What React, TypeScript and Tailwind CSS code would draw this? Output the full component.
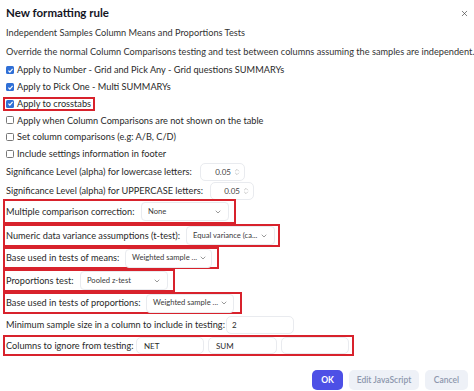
import { X, ChevronDown, ChevronsUpDown } from "lucide-react";

const font = { fontFamily: "Lato, 'Noto Sans', sans-serif" };

function Check({ checked, label, boxed }: { checked?: boolean; label: string; boxed?: boolean }) {
  return (
    <div className="flex h-[16.7px] items-center">
      <div
        className={`flex items-center gap-[3px] whitespace-nowrap ${boxed ? "-ml-[3px] h-[14px] border-2 border-[#d8222c] pl-[1px] pr-[2px]" : ""}`}
      >
        {checked ? (
          <span className="flex h-[8px] w-[8px] items-center justify-center rounded-[1.5px] bg-[#2f6fd6]">
            <svg viewBox="0 0 10 10" className="h-[7px] w-[7px]">
              <path d="M2 5.2 4.1 7.2 8 2.8" fill="none" stroke="white" strokeWidth="1.7" />
            </svg>
          </span>
        ) : (
          <span className="h-[8px] w-[8px] rounded-[1.5px] border border-[#777]" />
        )}
        <span className="text-[9.2px] text-[#2a2a2a]">{label}</span>
      </div>
    </div>
  );
}

function Select({ value, w }: { value: string; w: string }) {
  return (
    <div
      className={`flex h-[19px] shrink-0 items-center justify-between gap-[2px] rounded-[4px] border border-[#e9ebef] bg-white pl-[6px] pr-[6px] ${w}`}
    >
      <span className="whitespace-nowrap text-[7.6px] text-[#3a3a3a]">{value}</span>
      <ChevronDown className="h-[8px] w-[8px] shrink-0 text-[#666]" strokeWidth={2} />
    </div>
  );
}

function Spin({ w }: { w: string }) {
  return (
    <div
      className={`flex h-[18px] shrink-0 items-center justify-end gap-[2px] rounded-[5px] border border-[#e9ebef] pr-[3px] ${w}`}
    >
      <span className="text-[8px] text-[#444]">0.05</span>
      <ChevronsUpDown className="h-[8px] w-[8px] text-[#999]" strokeWidth={1.5} />
    </div>
  );
}

function BoxRow({
  label,
  labelW,
  children,
  w,
  h = "h-[23px]",
}: {
  label: string;
  labelW: string;
  children: React.ReactNode;
  w: string;
  h?: string;
}) {
  return (
    <div className={`-ml-[3px] flex items-center border-2 border-[#d8222c] pl-[1px] ${h} ${w}`}>
      <span className={`shrink-0 whitespace-nowrap text-[9.2px] text-[#2a2a2a] ${labelW}`}>{label}</span>
      {children}
    </div>
  );
}

export default function App() {
  return (
    <div className="h-[391px] w-[474px] overflow-hidden bg-white text-[#2a2a2a]" style={font}>
      <div className="flex h-[26px] items-center justify-between pl-[6px] pr-[5px]">
        <h1 className="text-[11.5px] font-bold text-[#15151f]">New formatting rule</h1>
        <X className="h-[9px] w-[9px] text-[#444]" strokeWidth={1.8} />
      </div>
      <div className="pl-[6px]">
        <p className="flex h-[14px] items-center whitespace-nowrap text-[9.2px] text-[#333]">
          Independent Samples Column Means and Proportions Tests
        </p>
        <p className="mt-[5px] flex h-[14px] items-center whitespace-nowrap text-[9.2px] text-[#333]">
          Override the normal Column Comparisons testing and test between columns assuming the samples are independent.
        </p>
        <div className="mt-[3px] flex flex-col">
          <Check checked label="Apply to Number - Grid and Pick Any - Grid questions SUMMARYs" />
          <Check checked label="Apply to Pick One - Multi SUMMARYs" />
          <Check checked boxed label="Apply to crosstabs" />
          <Check label="Apply when Column Comparisons are not shown on the table" />
          <Check label="Set column comparisons (e.g: A/B, C/D)" />
          <Check label="Include settings information in footer" />
        </div>
        <div className="flex h-[19px] items-center">
          <span className="w-[194px] shrink-0 whitespace-nowrap text-[9.2px]">
            Significance Level (alpha) for lowercase letters:
          </span>
          <Spin w="w-[45px]" />
        </div>
        <div className="flex h-[19px] items-center">
          <span className="w-[204px] shrink-0 whitespace-nowrap text-[9.2px]">
            Significance Level (alpha) for UPPERCASE letters:
          </span>
          <Spin w="w-[44px]" />
        </div>
        <div className="-mt-[1px] flex flex-col">
          <BoxRow label="Multiple comparison correction:" labelW="w-[135px]" w="w-[233px]" h="h-[25px]">
            <Select value="None" w="w-[88px]" />
          </BoxRow>
          <BoxRow label="Numeric data variance assumptions (t-test):" labelW="w-[180px]" w="w-[277px]">
            <Select value="Equal variance (ca..." w="w-[89px]" />
          </BoxRow>
          <BoxRow label="Base used in tests of means:" labelW="w-[119px]" w="w-[216px]" h="h-[22px]">
            <Select value="Weighted sample ..." w="w-[87px]" />
          </BoxRow>
          <BoxRow label="Proportions test:" labelW="w-[74px]" w="w-[172px]">
            <Select value="Pooled z-test" w="w-[88px]" />
          </BoxRow>
          <BoxRow label="Base used in tests of proportions:" labelW="w-[140px]" w="w-[239px]" h="h-[22px]">
            <Select value="Weighted sample ..." w="w-[88px]" />
          </BoxRow>
        </div>
        <div className="flex h-[21px] items-center">
          <span className="w-[220px] shrink-0 whitespace-nowrap text-[9.2px]">
            Minimum sample size in a column to include in testing:
          </span>
          <div className="flex h-[18px] w-[68px] items-center rounded-[5px] border border-[#e9ebef] pl-[5px] text-[8px]">
            2
          </div>
        </div>
        <BoxRow label="Columns to ignore from testing:" labelW="w-[130px]" w="w-[351px]" h="h-[21px]">
          <div className="flex gap-[4px]">
            <div className="flex h-[17px] w-[68px] items-center rounded-[5px] border border-[#e9ebef] pl-[7px] text-[8px]">
              NET
            </div>
            <div className="flex h-[17px] w-[69px] items-center rounded-[5px] border border-[#e9ebef] pl-[7px] text-[8px]">
              SUM
            </div>
            <div className="h-[17px] w-[68px] rounded-[5px] border border-[#e9ebef]" />
          </div>
        </BoxRow>
      </div>
      <div className="mt-[14px] flex justify-end gap-[6px] pr-[6px]">
        <button className="h-[20px] w-[31px] rounded-[5px] bg-[#4d50e6] text-[8.5px] font-bold text-white">OK</button>
        <button className="h-[20px] w-[70px] rounded-[5px] bg-[#eef1f7] text-[8.5px] font-semibold text-[#8d97ad]">
          Edit JavaScript
        </button>
        <button className="h-[20px] w-[43px] rounded-[5px] bg-[#eef1f7] text-[8.5px] font-semibold text-[#8d97ad]">
          Cancel
        </button>
      </div>
    </div>
  );
}
